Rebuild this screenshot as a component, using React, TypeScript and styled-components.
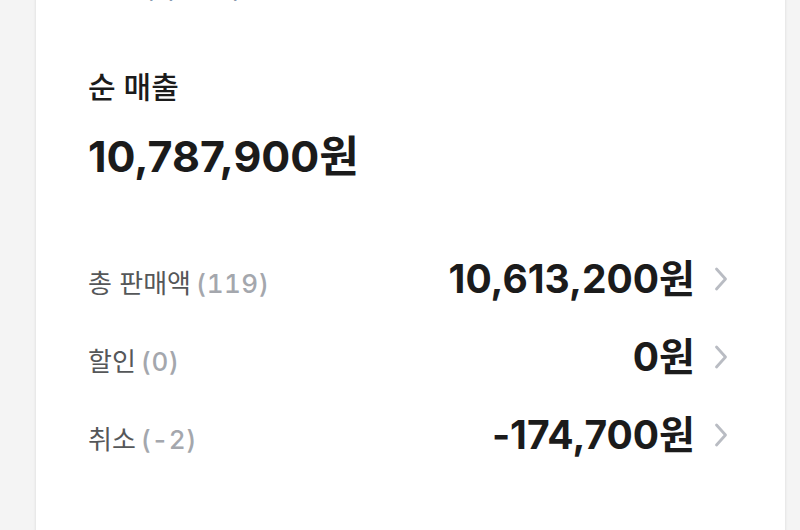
import React from 'react';
import styled, { createGlobalStyle } from 'styled-components';

const GlobalStyle = createGlobalStyle`
  html, body {
    margin: 0;
    padding: 0;
    background: #f4f4f4;
    font-family: Inter, "Noto Sans CJK KR", sans-serif;
    overflow: hidden;
  }
`;

type Line = { label: string; count: string; amount: string };

const LINES: Line[] = [
  { label: '총 판매액', count: '(119)', amount: '10,613,200원' },
  { label: '할인', count: '(0)', amount: '0원' },
  { label: '취소', count: '(-2)', amount: '-174,700원' },
];

const Chevron = () => (
  <ChevronIcon width="16" height="26" viewBox="0 0 16 26" fill="none">
    <path d="M3.5 3 L12.5 13 L3.5 23" stroke="#b9bcc3" strokeWidth="2.8" strokeLinecap="round" strokeLinejoin="round" />
  </ChevronIcon>
);

const App: React.FC = () => (
  <>
    <GlobalStyle />
    <Page>
      <Card>
        <PeriodBar>
          <PeriodLink>전일 대비</PeriodLink>
          <PeriodLink>기준</PeriodLink>
        </PeriodBar>
        <Title>순 매출</Title>
        <Total>10,787,900원</Total>
        <Rows>
          {LINES.map(l => (
            <Row key={l.label}>
              <Label>
                {l.label}
                <Count>{l.count}</Count>
              </Label>
              <Amount>{l.amount}</Amount>
              <Chevron />
            </Row>
          ))}
        </Rows>
      </Card>
    </Page>
  </>
);

const Page = styled.div`
  height: 530px;
  padding: 0 15px 0 36px;
  overflow: hidden;
`;

const Card = styled.div`
  background: #ffffff;
  min-height: 600px;
  margin-top: -41px;
  padding: 0 56px 0 52px;
  box-shadow: 0 0 3px rgba(0, 0, 0, 0.12);
`;

const PeriodBar = styled.div`
  display: flex;
  gap: 44px;
  height: 42px;
  align-items: flex-end;
  padding-left: 0;
`;

const PeriodLink = styled.span`
  font-size: 22px;
  line-height: 22px;
  color: #6c839b;
  font-weight: 500;
`;

const Title = styled.div`
  margin-top: 66px;
  font-size: 30px;
  font-weight: 500;
  color: #1b1b1b;
  line-height: 40px;
`;

const Total = styled.div`
  margin-top: 23px;
  font-size: 43px;
  font-weight: 700;
  color: #1b1b1b;
  line-height: 52px;
`;

const Rows = styled.div`
  margin-top: 73px;
  display: flex;
  flex-direction: column;
  gap: 30px;
`;

const Row = styled.div`
  display: flex;
  align-items: baseline;
  height: 48px;
  gap: 18px;
`;

const Label = styled.div`
  flex: 1;
  font-size: 26px;
  line-height: 48px;
  color: #555759;
  display: flex;
  align-items: baseline;
  gap: 5px;
`;

const Count = styled.span`
  color: #a4a7ad;
  font-weight: 500;
  font-variant-numeric: tabular-nums;
  letter-spacing: 0.5px;
`;

const Amount = styled.div`
  font-size: 39px;
  line-height: 48px;
  font-weight: 700;
  color: #1b1b1b;
`;

const ChevronIcon = styled.svg`
  align-self: center;
  flex-shrink: 0;
`;

export default App;
